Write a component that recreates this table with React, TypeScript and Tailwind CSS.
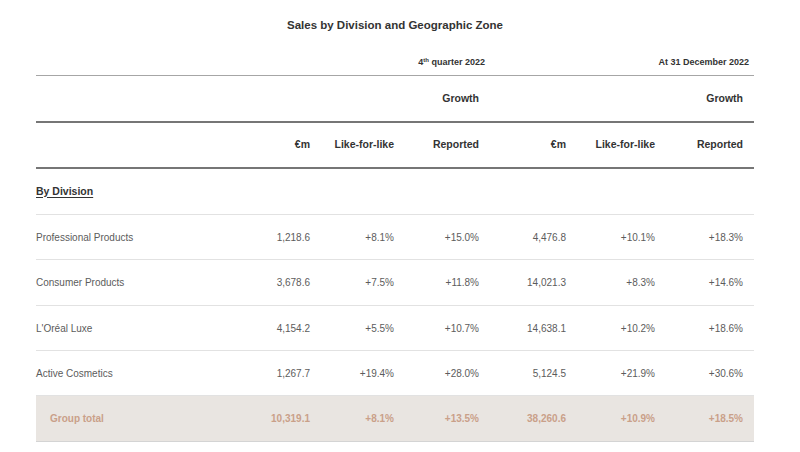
import React from "react";

const cols = "grid grid-cols-[201px_84px_84px_85px_87px_89px_88px]";

const rows = [
  ["Professional Products", "1,218.6", "+8.1%", "+15.0%", "4,476.8", "+10.1%", "+18.3%"],
  ["Consumer Products", "3,678.6", "+7.5%", "+11.8%", "14,021.3", "+8.3%", "+14.6%"],
  ["L'Oréal Luxe", "4,154.2", "+5.5%", "+10.7%", "14,638.1", "+10.2%", "+18.6%"],
  ["Active Cosmetics", "1,267.7", "+19.4%", "+28.0%", "5,124.5", "+21.9%", "+30.6%"],
];

export default function App() {
  return (
    <div className="w-[800px] h-[452px] bg-white font-['Liberation_Sans',Arial,sans-serif] overflow-hidden">
      <div className="ml-[36px] w-[718px]">
        <h1 className="pt-[17px] text-center text-[11.5px] leading-[16px] font-bold text-[#333]">
          Sales by Division and Geographic Zone
        </h1>

        <div className={`${cols} mt-[15px] h-[28px] border-b border-[#a6a6a6] items-center text-[9px] leading-[12px] font-bold text-[#333]`}>
          <div className="col-span-4 text-right pr-[5px]">
            4<span className="relative -top-[3px] text-[6px] leading-none">th</span> quarter 2022
          </div>
          <div className="col-span-3 text-right pr-[5px]">At 31 December 2022</div>
        </div>

        <div className={`${cols} h-[47px] border-b-2 border-[#767676] items-center text-[10.5px] font-bold text-[#333]`}>
          <div className="col-span-4 text-right pr-[11px]">Growth</div>
          <div className="col-span-3 text-right pr-[11px]">Growth</div>
        </div>

        <div className={`${cols} h-[46px] border-b-2 border-[#767676] items-center text-[10.5px] font-bold text-[#333]`}>
          <div />
          <div className="text-right pr-[11px]">€m</div>
          <div className="text-right pr-[11px]">Like-for-like</div>
          <div className="text-right pr-[11px]">Reported</div>
          <div className="text-right pr-[11px]">€m</div>
          <div className="text-right pr-[11px]">Like-for-like</div>
          <div className="text-right pr-[11px]">Reported</div>
        </div>

        <div className="flex h-[46px] items-center border-b border-[#e2e2e2] text-[10.5px] font-bold text-[#333]">
          <span className="underline underline-offset-2">By Division</span>
        </div>

        {rows.map((r, idx) => (
          <div
            key={r[0]}
            className={`${cols} ${idx === 1 ? "h-[46px]" : "h-[45px]"} items-center border-b border-[#e2e2e2] text-[10px] text-[#5c5c5c]`}
          >
            <div>{r[0]}</div>
            {r.slice(1).map((v, i) => (
              <div key={i} className="text-right pr-[11px]">
                {v}
              </div>
            ))}
          </div>
        ))}

        <div className={`${cols} h-[46px] items-center border-b border-[#d4d4d4] bg-[#e9e5e1] text-[10px] font-bold text-[#c9a089]`}>
          <div className="pl-[14px]">Group total</div>
          <div className="text-right pr-[11px]">10,319.1</div>
          <div className="text-right pr-[11px]">+8.1%</div>
          <div className="text-right pr-[11px]">+13.5%</div>
          <div className="text-right pr-[11px]">38,260.6</div>
          <div className="text-right pr-[11px]">+10.9%</div>
          <div className="text-right pr-[11px]">+18.5%</div>
        </div>
      </div>
    </div>
  );
}
